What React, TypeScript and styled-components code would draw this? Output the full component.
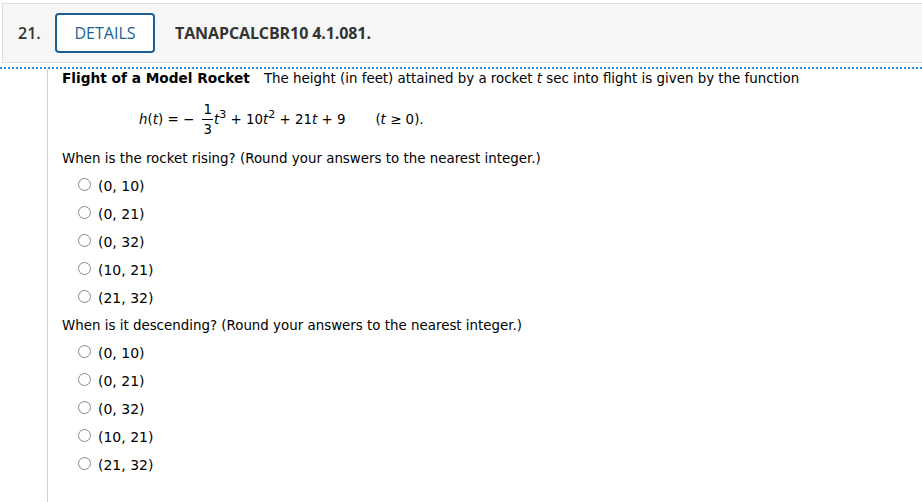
import React from "react";
import styled, { createGlobalStyle } from "styled-components";

const Global = createGlobalStyle`
  html, body { margin: 0; padding: 0; background: #fff; }
  body { width: 922px; height: 502px; overflow: hidden; }
`;

const Page = styled.div`
  width: 922px;
  height: 502px;
  display: flex;
  flex-direction: column;
  padding-top: 3px;
  box-sizing: border-box;
`;

const Header = styled.div`
  margin-left: 2px;
  height: 60px;
  box-sizing: border-box;
  background: #f6f6f6;
  border-top: 1px solid #dcdcdc;
  border-left: 1px solid #dcdcdc;
  border-bottom: 1px solid #dcdcdc;
  display: flex;
  align-items: center;
  font-family: "Open Sans", "Liberation Sans", sans-serif;
`;

const QNum = styled.span`
  width: 52px;
  padding-left: 15px;
  box-sizing: border-box;
  font-size: 16px;
  font-weight: 600;
  color: #333;
`;

const DetailsBtn = styled.button`
  width: 100px;
  height: 40px;
  box-sizing: border-box;
  border: 2px solid #1d5f93;
  border-radius: 4px;
  background: #fff;
  color: #1d5f93;
  font-family: "Open Sans", "Liberation Sans", sans-serif;
  font-size: 16px;
  font-weight: 500;
  padding: 0;
`;

const Code = styled.span`
  margin-left: 20px;
  font-size: 16px;
  font-weight: 700;
  color: #333;
  letter-spacing: -0.1px;
`;

const Dotted = styled.div`
  margin-top: 4px;
  height: 0;
  border-top: 2px dotted #2b8fe0;
`;

const Body = styled.div`
  flex: 1;
  margin-left: 47px;
  border-left: 1px solid #d0d0d0;
  padding-left: 14px;
  font-family: Verdana, "DejaVu Sans", "Bitstream Vera Sans", sans-serif;
  font-size: 13.4px;
  color: #000;
`;

const Intro = styled.div`
  margin-top: 1px;
  line-height: 16px;
`;

const Title = styled.b`
  font-size: 13.7px;
  margin-right: 14px;
`;

const Formula = styled.div`
  display: flex;
  align-items: center;
  margin: 12px 0 0 77px;
  height: 40px;
  white-space: pre;
  font-size: 13.4px;
`;

const Frac = styled.span`
  display: inline-flex;
  flex-direction: column;
  align-items: center;
  margin: 0 1px 0 4px;
  line-height: 15px;
  & > span:first-child {
    border-bottom: 1px solid #000;
    padding: 0 1px 2px;
  }
  & > span:last-child {
    padding-top: 2px;
  }
`;

const Sup = styled.sup`
  font-size: 11px;
  vertical-align: 6px;
  line-height: 0;
`;

const Prompt = styled.div`
  margin-top: 12px;
  line-height: 16px;
`;

const Options = styled.div`
  display: flex;
  flex-direction: column;
  gap: 12px;
  margin: 11px 0 3px 16px;
  font-size: 14px;
`;

const Option = styled.label`
  display: flex;
  align-items: center;
  height: 16px;
  gap: 7px;
`;

const Radio = styled.span`
  width: 13px;
  height: 13px;
  border-radius: 50%;
  border: 1px solid #8a8a8a;
  background: #fff;
  box-sizing: border-box;
  margin-top: -4px;
`;

const opts = ["(0, 10)", "(0, 21)", "(0, 32)", "(10, 21)", "(21, 32)"];

function Group({ prompt }: { prompt: string }) {
  return (
    <>
      <Prompt>{prompt}</Prompt>
      <Options>
        {opts.map((o) => (
          <Option key={o}>
            <Radio />
            <span>{o}</span>
          </Option>
        ))}
      </Options>
    </>
  );
}

export default function App() {
  return (
    <>
      <Global />
      <Page>
        <Header>
          <QNum>21.</QNum>
          <DetailsBtn>DETAILS</DetailsBtn>
          <Code>TANAPCALCBR10 4.1.081.</Code>
        </Header>
        <Dotted />
        <Body>
          <Intro>
            <Title>Flight of a Model Rocket</Title>
            The height (in feet) attained by a rocket <i>t</i> sec into flight is given by the function
          </Intro>
          <Formula>
            <span><i>h</i>(<i>t</i>) = − </span>
            <Frac><span>1</span><span>3</span></Frac>
            <span><i>t</i><Sup>3</Sup> + 10<i>t</i><Sup>2</Sup> + 21<i>t</i> + 9       (<i>t</i> ≥ 0).</span>
          </Formula>
          <Group prompt="When is the rocket rising? (Round your answers to the nearest integer.)" />
          <Group prompt="When is it descending? (Round your answers to the nearest integer.)" />
        </Body>
      </Page>
    </>
  );
}
